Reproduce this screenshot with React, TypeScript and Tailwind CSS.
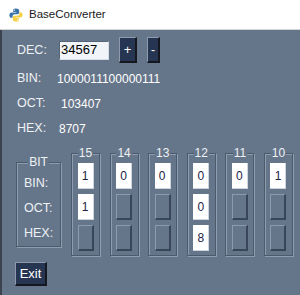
import React from "react";

const font = { fontFamily: '"Liberation Sans", Arial, sans-serif' };

function PyIcon() {
  return (
    <svg width="14" height="14" viewBox="0 0 14 14">
      <path d="M6.8 0.5 C4.5 0.5 4.2 1.4 4.2 2.6 V4 H7.2 V4.6 H2.6 C1.2 4.6 0.4 5.6 0.4 7.2 C0.4 8.9 1.2 9.8 2.6 9.8 H3.6 V8.2 C3.6 7 4.6 6.2 5.8 6.2 H8.6 C9.6 6.2 10.2 5.5 10.2 4.6 V2.6 C10.2 1.4 9 0.5 6.8 0.5 Z" fill="#3b73a8" />
      <circle cx="5.4" cy="2.2" r="0.6" fill="#fff" />
      <path d="M7.2 13.5 C9.5 13.5 9.8 12.6 9.8 11.4 V10 H6.8 V9.4 H11.4 C12.8 9.4 13.6 8.4 13.6 6.8 C13.6 5.1 12.8 4.2 11.4 4.2 H10.4 V5.8 C10.4 7 9.4 7.8 8.2 7.8 H5.4 C4.4 7.8 3.8 8.5 3.8 9.4 V11.4 C3.8 12.6 5 13.5 7.2 13.5 Z" fill="#f7d046" />
      <circle cx="8.6" cy="11.8" r="0.6" fill="#fff" />
    </svg>
  );
}

function Frame({ title, children, className }: { title: string; children: React.ReactNode; className?: string }) {
  return (
    <div className={"relative border border-[#4c5a6e] shadow-[inset_1px_1px_0_#8e9cb0,1px_1px_0_#8e9cb0] " + (className ?? "")}>
      <div className="absolute left-0 right-0 -top-[9px] flex justify-center">
        <span className="bg-[#66768a] px-[1px] text-[12px] leading-[16px] text-[#eef1f5]">{title}</span>
      </div>
      {children}
    </div>
  );
}

function Cell({ v }: { v?: string }) {
  if (v !== undefined) {
    return (
      <div className="flex h-[26px] w-[16px] items-center justify-center border-r border-b border-[#cfd5de] bg-white text-[12px] text-[#1c2446]">
        {v}
      </div>
    );
  }
  return (
    <div className="h-[26px] w-[16px] border-t border-l border-r-2 border-b-2 border-t-[#8d9bb0] border-l-[#8d9bb0] border-r-[#39465a] border-b-[#39465a] bg-[#66768a]" />
  );
}

const bits: { n: string; b: string; o?: string; h?: string }[] = [
  { n: "15", b: "1", o: "1" },
  { n: "14", b: "0" },
  { n: "13", b: "0" },
  { n: "12", b: "0", o: "0", h: "8" },
  { n: "11", b: "0" },
  { n: "10", b: "1" },
];

const navyBtn =
  "flex items-center justify-center bg-[#263552] text-white border-t border-l border-r-2 border-b-2 border-t-[#8f9bad] border-l-[#8f9bad] border-r-[#15181f] border-b-[#15181f]";

export default function App() {
  return (
    <div className="w-[300px] h-[295px] overflow-hidden bg-white" style={font}>
      <div className="flex h-[30px] items-center border-b border-[#d4d4d4] bg-white pl-[9px]">
        <PyIcon />
        <span className="ml-[6px] text-[11.5px] text-[#1a1a1a]">BaseConverter</span>
      </div>
      <div className="flex h-[265px] flex-col border-l-2 border-[#3d4250] bg-[#66768a] pl-[15px] pt-[7px] text-[12.5px] text-[#eef1f5]">
        <div className="flex h-[26px] items-center">
          <span className="w-[42px]">DEC:</span>
          <div className="flex h-[19px] w-[50px] items-center border-t border-l border-[#56647a] border-r border-b border-r-[#d7dde6] border-b-[#d7dde6] bg-[#f1f4f9] pl-[1px] text-[13px] text-black">
            34567
          </div>
          <div className={navyBtn + " ml-[10px] h-[26px] w-[18px] text-[13px]"}>+</div>
          <div className={navyBtn + " ml-[10px] h-[26px] w-[13px] text-[12px]"}>-</div>
        </div>
        <div className="mt-[3px] flex h-[25px] items-center">
          <span className="w-[40px]">BIN:</span>
          <span className="text-[12px] text-white">1000011100000111</span>
        </div>
        <div className="flex h-[25px] items-center">
          <span className="w-[40px]">OCT:</span>
          <span className="ml-[4px] text-[12px] text-white">103407</span>
        </div>
        <div className="flex h-[25px] items-center">
          <span className="w-[40px]">HEX:</span>
          <span className="ml-[2px] text-[12px] text-white">8707</span>
        </div>
        <div className="mt-[12px] flex items-center -ml-[1px]">
          <Frame title="BIT" className="w-[45px] pl-[7px] pt-[8px]">
            <div className="flex h-[25px] items-center">BIN:</div>
            <div className="flex h-[25px] items-center">OCT:</div>
            <div className="flex h-[25px] items-center">HEX:</div>
          </Frame>
          <div className="ml-[10px] flex gap-[9.6px]">
            {bits.map((c) => (
              <Frame key={c.n} title={c.n} className="w-[29px] pt-[9px] pb-[4px]">
                <div className="flex flex-col items-center gap-[5px]">
                  <Cell v={c.b} />
                  <Cell v={c.o} />
                  <Cell v={c.h} />
                </div>
              </Frame>
            ))}
          </div>
        </div>
        <div className={navyBtn + " mt-[6px] -ml-[2px] h-[24px] w-[32px] text-[13px]"}>Exit</div>
      </div>
    </div>
  );
}
